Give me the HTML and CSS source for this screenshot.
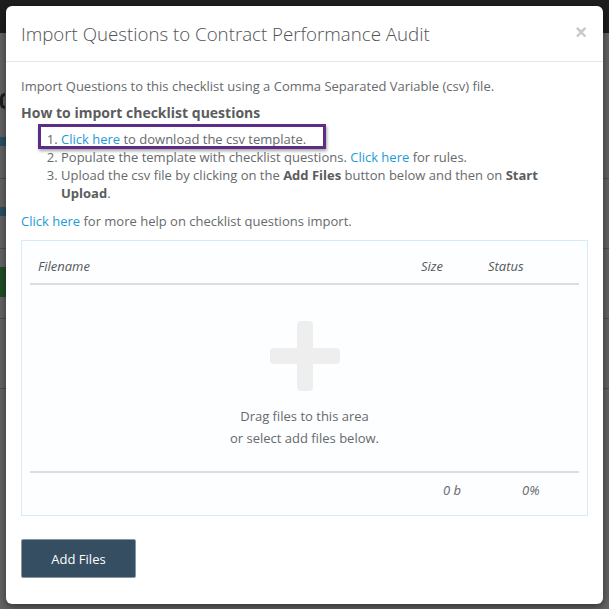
FILE: index.html
```html
<!DOCTYPE html>
<html lang="en">
<head>
    <meta charset="UTF-8">
    <title>Import Questions</title>
    <link rel="stylesheet" href="styles.css">
</head>
<body>
<div class="navbar"></div>
<div class="page">
    <div class="page-title"></div>
    <div class="page-row"><span class="page-link"></span></div>
    <div class="page-row"><span class="page-link"></span></div>
    <div class="page-row green-row"><span class="page-btn"></span></div>
    <div class="page-row"></div>
</div>

<div class="modal">
    <div class="modal-header">
        <h4 class="modal-title">Import Questions to Contract Performance Audit</h4>
        <span class="close">&times;</span>
    </div>
    <div class="modal-body">
        <p class="intro">Import Questions to this checklist using a Comma Separated Variable (csv) file.</p>
        <h5 class="how">How to import checklist questions</h5>
        <ol class="steps">
            <li class="highlighted"><a href="#">Click here</a> to download the csv template.</li>
            <li>Populate the template with checklist questions. <a href="#">Click here</a> for rules.</li>
            <li>Upload the csv file by clicking on the <b>Add Files</b> button below and then on <b>Start Upload</b>.</li>
        </ol>
        <p class="more"><a href="#">Click here</a> for more help on checklist questions import.</p>

        <div class="dropzone">
            <div class="file-head">
                <span class="col-name">Filename</span>
                <span class="col-size">Size</span>
                <span class="col-status">Status</span>
            </div>
            <div class="drop-area">
                <div class="plus"></div>
                <div class="drop-text">Drag files to this area</div>
                <div class="drop-text">or select add files below.</div>
            </div>
            <div class="file-foot">
                <span class="col-name"></span>
                <span class="col-size">0 b</span>
                <span class="col-status">0%</span>
            </div>
        </div>

        <button class="btn-add">Add Files</button>
    </div>
</div>
</body>
</html>
```

FILE: styles.css
```css
* {
    padding: 0;
    margin: 0;
    box-sizing: border-box;
}

body {
    width: 609px;
    height: 609px;
    overflow: hidden;
    background: #646464;
    font-family: "Open Sans", "Liberation Sans", sans-serif;
    font-size: 13px;
    color: #676a6c;
    position: relative;
}

/* dimmed page behind the modal */
.navbar {
    height: 33px;
    background: #1e1e1e;
}

.page-title {
    margin-top: 60px;
    width: 5px;
    height: 16px;
    border: 3px solid #1f1f1f;
    border-right: 0;
    border-radius: 6px 0 0 6px;
}

.page-row {
    height: 70px;
    border-bottom: 1px solid #4e4e4e;
    padding-top: 28px;
}

.page-link {
    display: block;
    width: 6px;
    height: 9px;
    background: #2c5064;
}

.green-row {
    padding-top: 18px;
}

.page-btn {
    display: block;
    background: #1f4f24;
    width: 6px;
    height: 30px;
}

/* modal */
.modal {
    position: absolute;
    left: 6px;
    top: 6px;
    width: 597px;
    height: 598px;
    background: #fff;
    border-radius: 6px;
    box-shadow: 0 3px 9px rgba(0, 0, 0, 0.5);
}

.modal-header {
    height: 56px;
    padding: 14px 15px;
    border-bottom: 1px solid #e5e5e5;
    position: relative;
}

.modal-title {
    font-size: 18.7px;
    font-weight: 300;
    line-height: 27px;
    color: #4f5356;
}

.close {
    position: absolute;
    right: 16px;
    top: 15px;
    font-size: 20px;
    font-weight: 700;
    color: #c8c8c8;
    line-height: 22px;
    font-family: "Liberation Sans", sans-serif;
}

.modal-body {
    padding: 15px 15px;
}

.intro {
    line-height: 18px;
}

.how {
    margin-top: 8px;
    font-size: 14px;
    font-weight: 700;
    line-height: 20px;
    color: #5a5d60;
}

.steps {
    margin-top: 7px;
    padding-left: 40px;
    line-height: 18px;
}

.steps b {
    color: #5a5d60;
}

.highlighted {
    position: relative;
}

.highlighted::before {
    content: "";
    box-sizing: border-box;
    position: absolute;
    left: -23px;
    top: -6px;
    width: 288px;
    height: 25px;
    border: 3px solid #5c2c87;
    box-shadow: 1px 2px 3px rgba(0, 0, 0, 0.35);
}

a {
    color: #1d9bd6;
    text-decoration: none;
}

.more {
    margin-top: 10px;
    line-height: 18px;
}

.dropzone {
    margin-top: 10px;
    height: 276px;
    border: 1px solid #d6eaf8;
    background: #fcfeff;
    padding: 8px 8px;
    display: flex;
    flex-direction: column;
}

.file-head,
.file-foot {
    display: flex;
    line-height: 18px;
    padding: 8px 0;
    font-style: italic;
}

.file-head {
    border-bottom: 2px solid #dddddd;
    color: #55585b;
}

.file-foot {
    border-top: 2px solid #dddddd;
}

.col-name {
    flex: 1;
    padding-left: 8px;
}

.col-size {
    width: 67px;
}

.col-status {
    width: 91px;
}

.file-foot .col-size {
    padding-left: 22px;
}

.file-foot .col-status {
    padding-left: 34px;
}

.drop-area {
    flex: 1;
    display: flex;
    flex-direction: column;
    align-items: center;
    padding-top: 36px;
}

.plus {
    width: 70px;
    height: 70px;
    position: relative;
    margin-bottom: 14px;
}

.plus::before,
.plus::after {
    content: "";
    position: absolute;
    background: #eeeeee;
    border-radius: 4px;
}

.plus::before {
    left: 27px;
    top: 0;
    width: 16px;
    height: 70px;
}

.plus::after {
    left: 0;
    top: 27px;
    width: 70px;
    height: 16px;
}

.drop-text {
    line-height: 22px;
}

.btn-add {
    margin-top: 23px;
    width: 115px;
    height: 39px;
    background: #364e62;
    color: #fff;
    border: 1px solid #8a959e;
    border-radius: 2px;
    font-family: "Open Sans", "Liberation Sans", sans-serif;
    font-size: 13px;
}
```
